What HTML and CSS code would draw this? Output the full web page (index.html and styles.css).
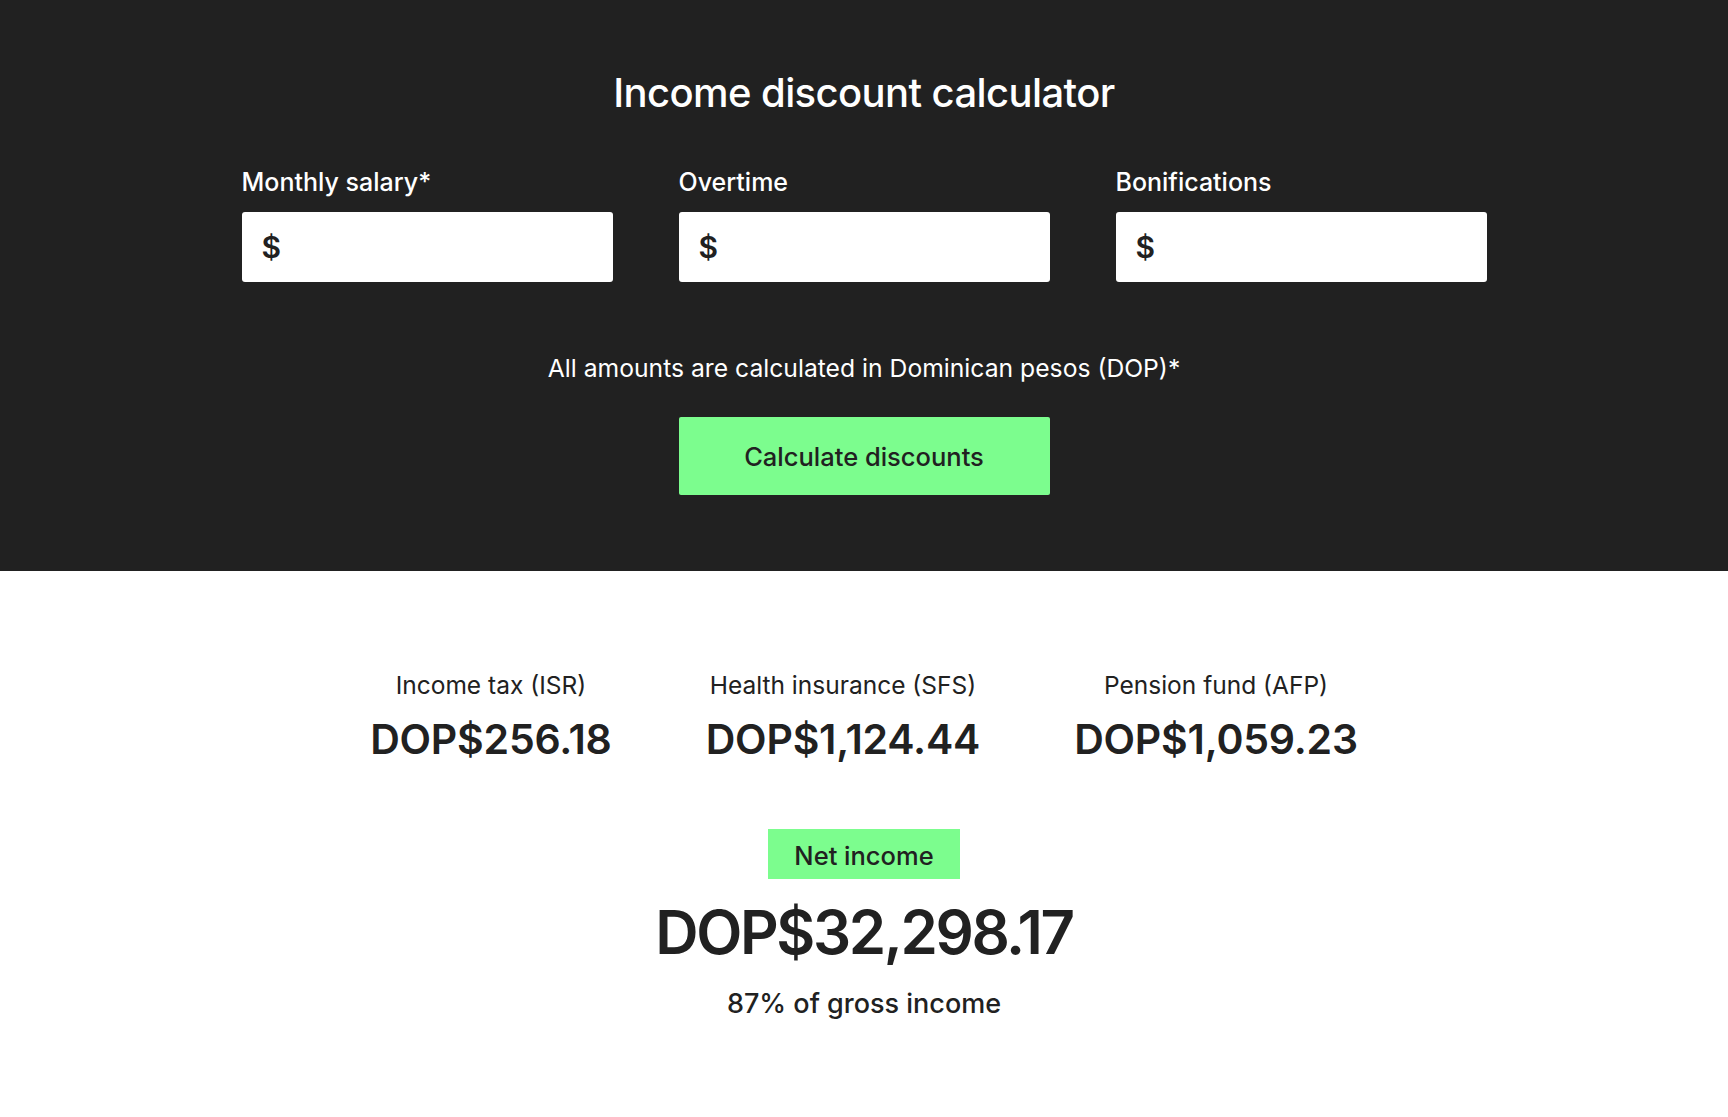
FILE: index.html
```html
<!DOCTYPE html>
<html lang="en">
<head>
  <meta charset="UTF-8">
  <meta name="viewport" content="width=device-width, initial-scale=1.0">
  <title>Income discount calculator</title>
  <link rel="stylesheet" href="styles.css">
</head>
<body>
  <section class="calculator">
    <h1>Income discount calculator</h1>

    <form id="discount-form">
      <div class="fields">
        <label class="field">
          <span class="field-label">Monthly salary*</span>
          <span class="input-box">
            <span class="currency">$</span>
            <input type="number" id="salary">
          </span>
        </label>
        <label class="field">
          <span class="field-label">Overtime</span>
          <span class="input-box">
            <span class="currency">$</span>
            <input type="number" id="overtime">
          </span>
        </label>
        <label class="field">
          <span class="field-label">Bonifications</span>
          <span class="input-box">
            <span class="currency">$</span>
            <input type="number" id="bonus">
          </span>
        </label>
      </div>

      <p class="note">All amounts are calculated in Dominican pesos (DOP)*</p>
      <button type="submit" class="calc-button">Calculate discounts</button>
    </form>
  </section>

  <section class="results">
    <div class="discounts">
      <div class="discount">
        <span class="discount-label">Income tax (ISR)</span>
        <span class="discount-value">DOP$256.18</span>
      </div>
      <div class="discount">
        <span class="discount-label">Health insurance (SFS)</span>
        <span class="discount-value">DOP$1,124.44</span>
      </div>
      <div class="discount">
        <span class="discount-label">Pension fund (AFP)</span>
        <span class="discount-value">DOP$1,059.23</span>
      </div>
    </div>

    <div class="net">
      <span class="net-badge">Net income</span>
      <span class="net-value">DOP$32,298.17</span>
      <span class="net-percent">87% of gross income</span>
    </div>
  </section>
</body>
</html>
```

FILE: styles.css
```css
body {
  font-family: Inter, "Noto Sans", sans-serif;
  margin: 0;
  padding: 0;
  background-color: white;
  color: #212121;
}

.calculator {
  background-color: #212121;
  color: white;
  padding: 69px 0 76px;
  display: flex;
  flex-direction: column;
  align-items: center;
}

h1 {
  margin: 0;
  font-size: 40px;
  font-weight: 500;
  line-height: 48px;
  letter-spacing: -0.6px;
}

form {
  display: flex;
  flex-direction: column;
  align-items: center;
}

.fields {
  display: flex;
  gap: 66px;
  margin-top: 51px;
}

.field {
  display: flex;
  flex-direction: column;
  gap: 15px;
  width: 371px;
}

.field-label {
  font-size: 25px;
  font-weight: 500;
  line-height: 29px;
}

.input-box {
  display: flex;
  align-items: center;
  height: 70px;
  background: white;
  border-radius: 3px;
  padding: 0 20px;
  box-sizing: border-box;
}

.currency {
  color: #212121;
  font-size: 30px;
  font-weight: 600;
}

.input-box input {
  flex: 1;
  border: none;
  outline: none;
  font-size: 24px;
  font-family: inherit;
  padding: 0 10px;
  background: transparent;
  min-width: 0;
}

.note {
  margin: 72px 0 0;
  font-size: 24.7px;
  line-height: 29px;
}

.calc-button {
  margin-top: 34px;
  width: 371px;
  height: 78px;
  background-color: #7cfd8e;
  color: #212121;
  border: none;
  border-radius: 2px;
  font-family: inherit;
  font-size: 25.5px;
  font-weight: 500;
  cursor: pointer;
}

.results {
  padding: 100px 0 60px;
  display: flex;
  flex-direction: column;
  align-items: center;
}

.discounts {
  display: flex;
  justify-content: center;
  gap: 94px;
}

.discount {
  display: flex;
  flex-direction: column;
  align-items: center;
  gap: 15px;
}

.discount-label {
  font-size: 24.5px;
  line-height: 29px;
}

.discount-value {
  font-size: 41px;
  font-weight: 600;
  line-height: 48px;
  letter-spacing: -0.2px;
}

.net {
  display: flex;
  flex-direction: column;
  align-items: center;
  margin-top: 66px;
}

.net-badge {
  background-color: #7cfd8e;
  width: 192px;
  height: 50px;
  display: flex;
  align-items: center;
  justify-content: center;
  font-size: 25.5px;
  font-weight: 500;
  padding-top: 3px;
  box-sizing: border-box;
}

.net-value {
  margin-top: 17px;
  font-size: 60px;
  font-weight: 600;
  line-height: 72px;
  letter-spacing: -2.4px;
}

.net-percent {
  margin-top: 21px;
  font-size: 27px;
  font-weight: 500;
  line-height: 29px;
}
```
